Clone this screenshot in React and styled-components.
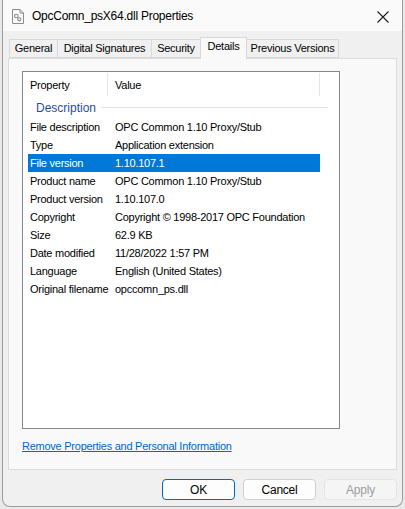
import React from 'react'
import styled, { createGlobalStyle } from 'styled-components'

const GlobalStyle = createGlobalStyle`
  html, body {
    margin: 0;
    padding: 0;
    background: #e9e9e9;
    font-family: "Liberation Sans", Arial, sans-serif;
  }
`

const rows = [
  ['File description', 'OPC Common 1.10 Proxy/Stub'],
  ['Type', 'Application extension'],
  ['File version', '1.10.107.1', true],
  ['Product name', 'OPC Common 1.10 Proxy/Stub'],
  ['Product version', '1.10.107.0'],
  ['Copyright', 'Copyright \u00a9 1998-2017 OPC Foundation'],
  ['Size', '62.9 KB'],
  ['Date modified', '11/28/2022 1:57 PM'],
  ['Language', 'English (United States)'],
  ['Original filename', 'opccomn_ps.dll'],
]

const tabs = [
  ['General', 49],
  ['Digital Signatures', 95],
  ['Security', 50],
  ['Details', 47, true],
  ['Previous Versions', 93],
]

const FileIcon = () => (
  <svg width="12" height="15" viewBox="0 0 12 15">
    <path d="M0.5 0.5h7.5l3.5 3.5v10.5h-11z" fill="#fbfbfb" stroke="#8c8c8c" />
    <path d="M8 0.5v3.5h3.5" fill="none" stroke="#8c8c8c" />
    <circle cx="4.3" cy="7" r="1.8" fill="none" stroke="#8a8a8a" strokeWidth="1.1" />
    <circle cx="7.3" cy="10.3" r="1.6" fill="none" stroke="#8a8a8a" strokeWidth="1.1" />
  </svg>
)

const CloseIcon = () => (
  <svg width="12" height="12" viewBox="0 0 12 12">
    <path d="M0.5 0.5L11.5 11.5M11.5 0.5L0.5 11.5" stroke="#1b1b1b" strokeWidth="1.1" />
  </svg>
)

const App = () => {
  return (
    <>
      <GlobalStyle />
      <Window>
        <TitleBar>
          <FileIcon />
          <Title>OpcComn_psX64.dll Properties</Title>
          <Close><CloseIcon /></Close>
        </TitleBar>
        <Body>
          <TabRow>
            {tabs.map(([label, w, active]) => (
              <Tab key={label} $w={w} $active={active}>{label}</Tab>
            ))}
          </TabRow>
          <Panel>
            <ListBox>
              <Header>
                <HeaderCell $w={85}>Property</HeaderCell>
                <HeaderCell $w={212}>Value</HeaderCell>
              </Header>
              <Group>
                <span>Description</span>
                <GroupLine />
              </Group>
              {rows.map(([prop, value, selected]) => (
                <Row key={prop} $selected={selected}>
                  <PropCell>{prop}</PropCell>
                  <span>{value}</span>
                </Row>
              ))}
            </ListBox>
            <Link href="#">Remove Properties and Personal Information</Link>
          </Panel>
          <Buttons>
            <Btn $default>OK</Btn>
            <Btn>Cancel</Btn>
            <Btn disabled>Apply</Btn>
          </Buttons>
        </Body>
      </Window>
    </>
  )
}

const Window = styled.div`
  margin-left: 2px;
  width: 401px;
  height: 507px;
  box-sizing: border-box;
  border: 1px solid #9c9c9c;
  border-top: none;
  border-radius: 0 0 8px 8px;
  background: #f0f0f0;
  display: flex;
  flex-direction: column;
  overflow: hidden;
`

const TitleBar = styled.div`
  height: 31px;
  display: flex;
  align-items: center;
  padding-left: 9px;
  background: #fafafa;
  svg { margin-top: 1px; }
`

const Title = styled.div`
  flex: 1;
  margin-left: 8px;
  font-size: 12px;
  letter-spacing: -0.25px;
  color: #000;
`

const Close = styled.div`
  width: 12px;
  height: 12px;
  margin-right: 13px;
  display: flex;
`

const Body = styled.div`
  padding: 0 5px 0 5px;
  display: flex;
  flex-direction: column;
`

const TabRow = styled.div`
  margin-top: 6px;
  height: 21px;
  padding-left: 1px;
  display: flex;
  align-items: flex-end;
  position: relative;
  z-index: 1;
`

const Tab = styled.div`
  width: ${p => p.$w}px;
  height: ${p => (p.$active ? 22 : 19)}px;
  margin-bottom: ${p => (p.$active ? -1 : 0)}px;
  margin-right: -1px;
  box-sizing: border-box;
  border: 1px solid #d9d9d9;
  border-bottom: ${p => (p.$active ? 'none' : '1px solid #d9d9d9')};
  background: ${p => (p.$active ? '#f9f9f9' : '#f0f0f0')};
  font-size: 11px;
  letter-spacing: -0.25px;
  color: #000;
  display: flex;
  justify-content: center;
  padding-top: 2px;
  &:last-child { margin-right: 0; }
`

const Panel = styled.div`
  height: 412px;
  box-sizing: border-box;
  border: 1px solid #dcdcdc;
  background: #f9f9f9;
  padding: 12px 0 0 13px;
  display: flex;
  flex-direction: column;
  align-items: flex-start;
`

const ListBox = styled.div`
  width: 318px;
  height: 358px;
  box-sizing: border-box;
  border: 1px solid #828790;
  background: #fff;
  font-size: 11px;
  letter-spacing: -0.25px;
  color: #000;
`

const Header = styled.div`
  height: 25px;
  display: flex;
  align-items: center;
`

const HeaderCell = styled.div`
  width: ${p => p.$w}px;
  height: 23px;
  box-sizing: border-box;
  padding-left: 7px;
  border-right: 1px solid #e5e5e5;
  display: flex;
  align-items: center;
`

const Group = styled.div`
  height: 21px;
  display: flex;
  align-items: center;
  padding-left: 13px;
  font-size: 12px;
  letter-spacing: 0;
  color: #1f4ea3;
`

const GroupLine = styled.div`
  flex: 1;
  height: 1px;
  margin: 0 11px 0 5px;
  background: #dde3ee;
`

const Row = styled.div`
  margin-left: 5px;
  width: 292px;
  height: 18px;
  display: flex;
  align-items: center;
  white-space: nowrap;
  background: ${p => (p.$selected ? '#0078d7' : 'transparent')};
  color: ${p => (p.$selected ? '#fff' : '#000')};
`

const PropCell = styled.span`
  width: 85px;
  padding-left: 2px;
`

const Link = styled.a`
  margin-top: 9px;
  line-height: 16px;
  font-size: 11px;
  letter-spacing: -0.25px;
  color: #0066cc;
  text-decoration: underline;
`

const Buttons = styled.div`
  margin-top: 9px;
  display: flex;
  justify-content: flex-end;
  gap: 8px;
`

const Btn = styled.button`
  width: 73px;
  height: 21px;
  box-sizing: border-box;
  padding: 0;
  border-radius: 4px;
  font-family: "Liberation Sans", Arial, sans-serif;
  font-size: 12px;
  letter-spacing: -0.25px;
  color: #000;
  background: #fdfdfd;
  border: 1px solid ${p => (p.$default ? '#0067c0' : '#d0d0d0')};
  &:disabled {
    background: #f5f5f5;
    border-color: #e5e5e5;
    color: #9d9d9d;
  }
`

export default App
